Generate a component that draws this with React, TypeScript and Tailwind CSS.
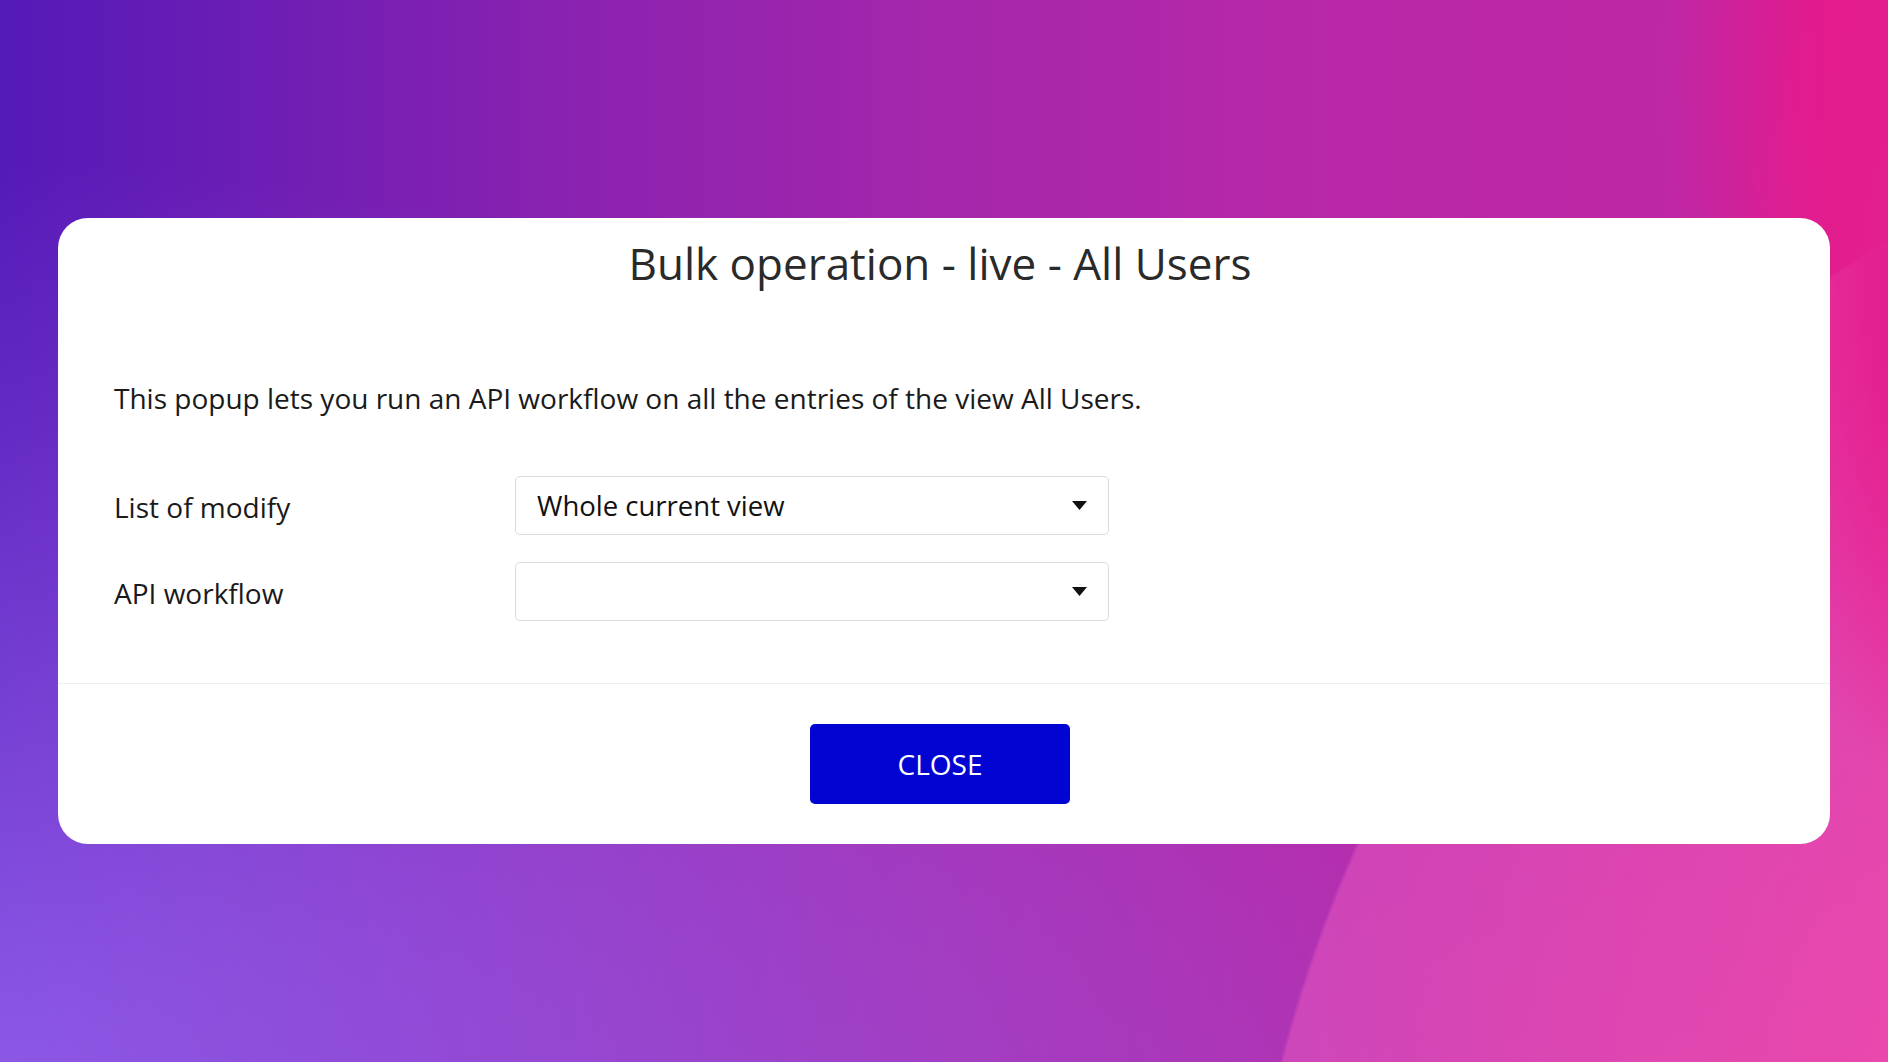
import React from "react";

function Caret() {
  return (
    <svg width="15" height="9" viewBox="0 0 15 9" className="shrink-0">
      <path d="M0 0 H15 L7.5 9 Z" fill="#111" />
    </svg>
  );
}

function SelectBox({ value }: { value?: string }) {
  return (
    <div className="w-[594px] h-[59px] border border-[#dcdcdc] rounded-[5px] bg-white flex items-center justify-between pl-[21px] pr-[21px]">
      <span className="text-[27.5px] leading-none text-[#111]">{value ?? ""}</span>
      <Caret />
    </div>
  );
}

export default function App() {
  return (
    <div className="min-h-screen w-full overflow-hidden font-['Open_Sans',sans-serif] bg-[radial-gradient(ellipse_260px_520px_at_1990px_300px,rgba(226,30,142,0.95)_40%,rgba(226,30,142,0)_100%),radial-gradient(circle_1363px_at_2600px_1400px,rgba(255,78,165,0.8)_45%,rgba(246,98,196,0.42)_99.7%,rgba(246,98,196,0)_100%),radial-gradient(ellipse_430px_760px_at_2090px_80px,rgba(228,26,140,1)_62%,rgba(228,26,140,0)_100%),radial-gradient(ellipse_1400px_900px_at_0%_100%,rgba(170,120,255,0.6)_0%,rgba(170,120,255,0)_100%),linear-gradient(0deg,rgba(140,90,220,0.18),rgba(140,90,220,0)_60%),linear-gradient(90deg,#541ab8_0%,#8a22b0_30%,#a527ab_50%,#b828a8_70%,#bd27a6_85%,#c02aa8_100%)] px-[58px] pt-[218px] pb-[218px]">
      <div className="bg-white rounded-[30px] w-full flex flex-col">
        <div className="pr-[8px] pt-[19px] flex justify-center">
          <h1 className="text-[44px] leading-[53px] text-[#2a2a2a] font-normal">
            Bulk operation - live - All Users
          </h1>
        </div>
        <div className="px-[56px] pt-[90px]">
          <p className="text-[28px] leading-[36px] text-[#1a1a1a]">
            This popup lets you run an API workflow on all the entries of the view All Users.
          </p>
          <div className="flex flex-col gap-[27px] pt-[60px] pb-[62px]">
            <div className="flex items-center">
              <div className="w-[401px] text-[28px] leading-[36px] pt-[3px] text-[#1a1a1a]">List of modify</div>
              <SelectBox value="Whole current view" />
            </div>
            <div className="flex items-center">
              <div className="w-[401px] text-[28px] leading-[36px] pt-[3px] text-[#1a1a1a]">API workflow</div>
              <SelectBox />
            </div>
          </div>
        </div>
        <div className="h-px bg-[#eeeeee] w-full" />
        <div className="flex justify-center pr-[8px] pt-[40px] pb-[40px]">
          <button className="w-[260px] h-[80px] rounded-[5px] bg-[#0204d2] text-white text-[28px]">
            CLOSE
          </button>
        </div>
      </div>
    </div>
  );
}
